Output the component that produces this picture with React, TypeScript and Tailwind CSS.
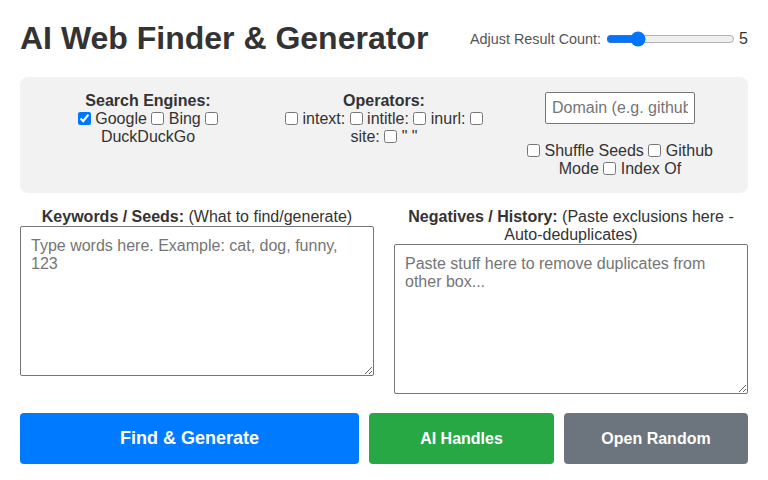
import React from "react";

function CB({ label, checked }: { label: string; checked?: boolean }) {
  return (
    <>
      <input type="checkbox" defaultChecked={checked} className="m-0 align-[-1px]" /> {label}{" "}
    </>
  );
}

export default function App() {
  return (
    <div
      className="p-5 text-[#333] bg-white leading-[normal] min-h-[480px]"
      style={{ fontFamily: '"Liberation Sans", Arial, sans-serif' }}
    >
      <div className="flex items-center justify-between">
        <h1 className="text-[32px] font-bold">AI Web Finder &amp; Generator</h1>
        <div className="flex items-center">
          <span className="text-[14.4px] text-[#555]">Adjust Result Count:</span>
          <input type="range" min={1} max={20} defaultValue={5} className="ml-[5px] w-[129px] m-0" />
          <span className="ml-[4px] text-[16px]">5</span>
        </div>
      </div>

      <div className="mt-5 bg-[#f2f2f2] rounded-lg p-[15px] grid grid-cols-3 gap-[10px] text-[16px] text-center">
        <div>
          <div className="font-bold">Search Engines:</div>
          <div>
            <CB label="Google" checked />
            <CB label="Bing" />
            <CB label="DuckDuckGo" />
          </div>
        </div>
        <div>
          <div className="font-bold">Operators:</div>
          <div>
            <CB label="intext:" />
            <CB label="intitle:" />
            <CB label="inurl:" />
            <CB label="site:" />
            <CB label={'" "'} />
          </div>
        </div>
        <div className="flex flex-col items-center">
          <input
            type="text"
            placeholder="Domain (e.g. github.com)"
            className="w-[150px] h-[32px] px-[6px] border border-[#767676] rounded-[2px] bg-white placeholder:text-[#757575]"
          />
          <div className="mt-[18px]">
            <CB label="Shuffle Seeds" />
            <CB label="Github Mode" />
            <CB label="Index Of" />
          </div>
        </div>
      </div>

      <div className="mt-[15px] grid grid-cols-2 gap-5 items-start text-[16px]">
        <div>
          <div className="text-center">
            <b>Keywords / Seeds:</b> (What to find/generate)
          </div>
          <textarea
            placeholder="Type words here. Example: cat, dog, funny, 123"
            className="block w-full h-[150px] p-[10px] border border-[#767676] rounded-[2px] bg-white placeholder:text-[#757575]"
          />
        </div>
        <div>
          <div className="text-center">
            <b>Negatives / History:</b> (Paste exclusions here - Auto-deduplicates)
          </div>
          <textarea
            placeholder="Paste stuff here to remove duplicates from other box..."
            className="block w-full h-[150px] p-[10px] border border-[#767676] rounded-[2px] bg-white placeholder:text-[#757575]"
          />
        </div>
      </div>

      <div className="mt-[19px] grid grid-cols-[339fr_185fr_184fr] gap-[10px] font-bold text-white">
        <button className="h-[51px] rounded bg-[#007bff] text-[18px]">Find &amp; Generate</button>
        <button className="h-[51px] rounded bg-[#28a745] text-[16px]">AI Handles</button>
        <button className="h-[51px] rounded bg-[#6c757d] text-[16px]">Open Random</button>
      </div>
    </div>
  );
}
